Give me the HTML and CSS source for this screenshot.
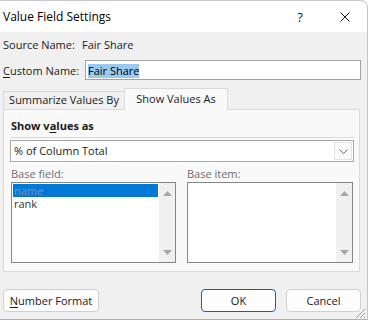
FILE: index.html
```html
<!DOCTYPE html>
<html>
<head>
  <meta charset="UTF-8">
  <title>Value Field Settings</title>
  <link rel="stylesheet" href="styles.css">
</head>
<body>
  <div class="dialog">
    <div class="titlebar">
      <span class="title">Value Field Settings</span>
      <span class="help">?</span>
      <span class="close">
        <svg width="10" height="10" viewBox="0 0 10 10"><path d="M0.5 0.5L9.5 9.5M9.5 0.5L0.5 9.5" stroke="#1a1a1a" stroke-width="1" fill="none"/></svg>
      </span>
    </div>

    <div class="content">
      <div class="row source">
        <span class="lbl lbl-source">Source Name:</span>
        <span>Fair Share</span>
      </div>
      <div class="row custom">
        <label class="lbl lbl-custom"><u>C</u>ustom Name:</label>
        <div class="textbox"><span class="selected-text">Fair Share</span></div>
      </div>

      <div class="tabs">
        <div class="tab tab-summarize">Summarize Values By</div>
        <div class="tab tab-show active">Show Values As</div>
      </div>

      <div class="panel">
        <div class="group-title">Show v<u>a</u>lues as</div>
        <div class="combo">
          <span class="combo-text">% of Column Total</span>
          <span class="drop">
            <svg width="9" height="5" viewBox="0 0 9 5"><path d="M0.5 0.5L4.5 4.5L8.5 0.5" stroke="#6b6b6b" stroke-width="1" fill="none"/></svg>
          </span>
        </div>

        <div class="lists">
          <div class="field field-left">
            <div class="field-label">Base field:</div>
            <div class="listbox">
              <div class="items">
                <div class="item selected">name</div>
                <div class="item">rank</div>
              </div>
              <div class="scroll">
                <svg width="9" height="5" viewBox="0 0 9 5"><path d="M0 5L4.5 0L9 5Z" fill="#a6a6a6"/></svg>
                <svg width="9" height="5" viewBox="0 0 9 5"><path d="M0 0L4.5 5L9 0Z" fill="#a6a6a6"/></svg>
              </div>
            </div>
          </div>
          <div class="field field-right">
            <div class="field-label">Base item:</div>
            <div class="listbox">
              <div class="items"></div>
              <div class="scroll">
                <svg width="9" height="5" viewBox="0 0 9 5"><path d="M0 5L4.5 0L9 5Z" fill="#a6a6a6"/></svg>
                <svg width="9" height="5" viewBox="0 0 9 5"><path d="M0 0L4.5 5L9 0Z" fill="#a6a6a6"/></svg>
              </div>
            </div>
          </div>
        </div>
      </div>

      <div class="buttons">
        <button class="btn btn-format"><u>N</u>umber Format</button>
        <span class="spacer"></span>
        <button class="btn btn-ok">OK</button>
        <button class="btn btn-cancel">Cancel</button>
      </div>
    </div>

    <div class="grip">
      <svg width="11" height="11" viewBox="0 0 11 11">
        <path d="M10 1L1 10M10 5L5 10M10 9L9 10" stroke="#9a9a9a" stroke-width="1" fill="none"/>
      </svg>
    </div>
  </div>
</body>
</html>
```

FILE: styles.css
```css
html, body {
  margin: 0;
  padding: 0;
  overflow: hidden;
}
body {
  font-family: "Segoe UI", "Open Sans", sans-serif;
  font-size: 11px;
  color: #1a1a1a;
  background-color: #ffffff;
}
u {
  text-decoration: underline;
  text-underline-offset: 2px;
}
.dialog {
  position: relative;
  width: 368px;
  height: 320px;
  box-sizing: border-box;
  background-color: #f0f0f0;
  border-right: 1px solid #c4c4c4;
  border-bottom: 1px solid #b0b0b0;
  border-top-right-radius: 7px;
}
.titlebar {
  display: flex;
  align-items: center;
  height: 32px;
  box-sizing: border-box;
  background-color: #ffffff;
  border-top: 1px solid #c8c8c8;
  border-top-right-radius: 7px;
}
.title {
  padding-left: 3px;
  font-size: 12px;
  color: #000000;
}
.help {
  margin-left: auto;
  width: 46px;
  text-align: center;
  font-size: 13px;
  color: #1a1a1a;
}
.close {
  display: flex;
  justify-content: center;
  width: 44px;
}
.content {
  padding: 0 6px 0 3px;
}
.row {
  display: flex;
  align-items: center;
}
.source {
  margin-top: 6px;
  height: 14px;
  line-height: 14px;
}
.lbl-source {
  width: 79px;
}
.custom {
  margin-top: 8px;
}
.lbl-custom {
  width: 82px;
}
.textbox {
  flex: 1;
  height: 20px;
  box-sizing: border-box;
  border: 1px solid #a2a2a2;
  background-color: #ffffff;
  padding: 2px 0 0 2px;
}
.selected-text {
  display: inline-block;
  height: 14px;
  line-height: 14px;
  background-color: #99c9ef;
  color: #000000;
}
.tabs {
  display: flex;
  align-items: flex-end;
  margin-top: 8px;
  height: 21px;
}
.tab {
  box-sizing: border-box;
  text-align: center;
  border: 1px solid #d9d9d9;
  border-bottom: none;
  line-height: 16px;
}
.tab-summarize {
  width: 121px;
  height: 18px;
  border-right: none;
  background-color: #f0f0f0;
}
.tab-show {
  width: 104px;
  height: 22px;
  line-height: 19px;
  background-color: #f9f9f9;
  position: relative;
  z-index: 1;
  margin-bottom: -1px;
}
.panel {
  width: 357px;
  box-sizing: border-box;
  border: 1px solid #dadada;
  background-color: #f9f9f9;
  padding: 8px 5px 8px 6px;
}
.group-title {
  font-weight: bold;
  line-height: 15px;
  padding: 0 0 4px 1px;
  border-bottom: 1px solid #d9d9d9;
}
.combo {
  display: flex;
  align-items: stretch;
  margin-top: 2px;
  height: 22px;
  box-sizing: border-box;
  border: 1px solid #a8a8a8;
  background-color: #ffffff;
}
.combo-text {
  flex: 1;
  padding-left: 3px;
  line-height: 20px;
}
.drop {
  display: flex;
  align-items: center;
  justify-content: center;
  width: 16px;
  margin: 1px;
  border: 1px solid #e2e2e2;
  background-color: #fbfbfb;
}
.lists {
  display: flex;
  gap: 11px;
  padding-left: 1px;
  margin-top: 4px;
}
.field-left {
  width: 165px;
}
.field-right {
  width: 166px;
}
.field-label {
  line-height: 15px;
  color: #6d6d6d;
}
.listbox {
  display: flex;
  margin-top: 1px;
  height: 81px;
  box-sizing: border-box;
  border: 1px solid #868686;
  background-color: #ffffff;
}
.items {
  flex: 1;
  padding: 1px;
}
.item {
  height: 13px;
  line-height: 13px;
  padding-left: 1px;
  color: #333333;
}
.item.selected {
  background-color: #0078d7;
  color: #8292a3;
}
.scroll {
  width: 16px;
  display: flex;
  flex-direction: column;
  justify-content: space-between;
  align-items: center;
  padding: 8px 0 7px;
  background-color: #f0f0f0;
}
.buttons {
  display: flex;
  gap: 10px;
  margin-top: 17px;
}
.spacer {
  flex: 1;
}
.btn {
  height: 23px;
  box-sizing: border-box;
  border: 1px solid #d0d0d0;
  border-radius: 4px;
  background-color: #fdfdfd;
  font-family: inherit;
  font-size: 11px;
  color: #1a1a1a;
  padding: 0;
}
.btn-format {
  width: 96px;
}
.btn-ok {
  width: 75px;
  border-color: #0067c0;
}
.btn-cancel {
  width: 75px;
}
.grip {
  position: absolute;
  right: 1px;
  bottom: 1px;
  width: 11px;
  height: 11px;
}
```
